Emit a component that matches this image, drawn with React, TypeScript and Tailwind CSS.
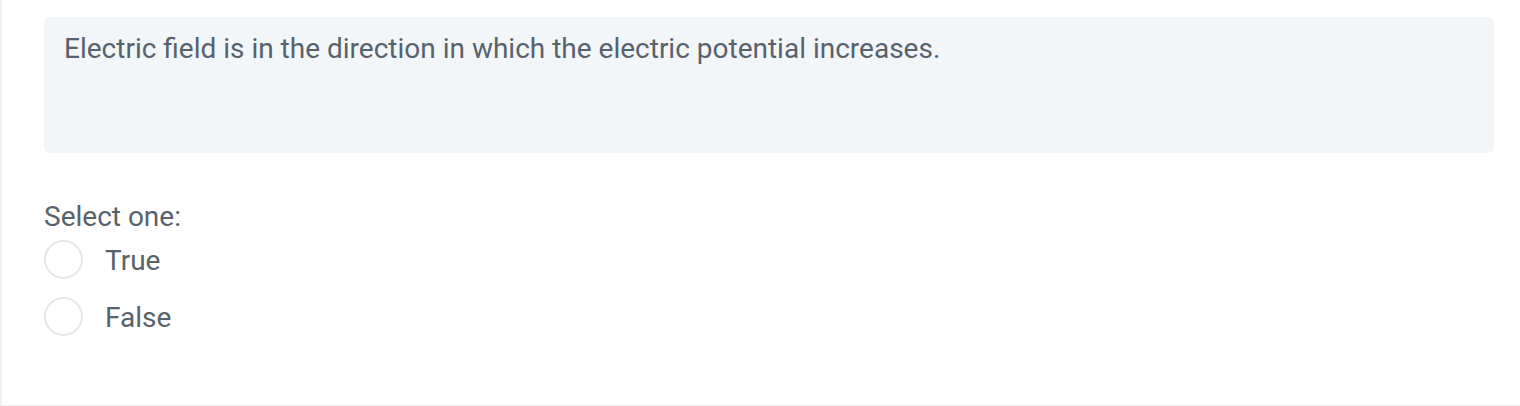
export default function App() {
  const options = ['True', 'False']

  return (
    <div className="min-h-[406px] w-[1520px] bg-white font-['Roboto',sans-serif] text-[#58626c]">
      <div className="h-[406px] border-l-2 border-b border-[#f0f0f0] pl-[42px] pr-[26px] pt-[17px]">
        <div className="h-[136px] rounded-[6px] bg-[#f2f6f9] px-5 pt-[16px] text-[28px] leading-[32px]">
          Electric field is in the direction in which the electric potential increases.
        </div>

        <div className="mt-[48px] text-[28px] leading-[32px]">Select one:</div>

        <div className="mt-[7px] flex flex-col gap-[18px]">
          {options.map((opt) => (
            <label key={opt} className="flex items-center">
              <span className="h-[39px] w-[39px] rounded-full border-2 border-[#e3e8ec] bg-white" />
              <span className="ml-[22px] pt-[3px] text-[28px] leading-[32px]">{opt}</span>
            </label>
          ))}
        </div>
      </div>
    </div>
  )
}
